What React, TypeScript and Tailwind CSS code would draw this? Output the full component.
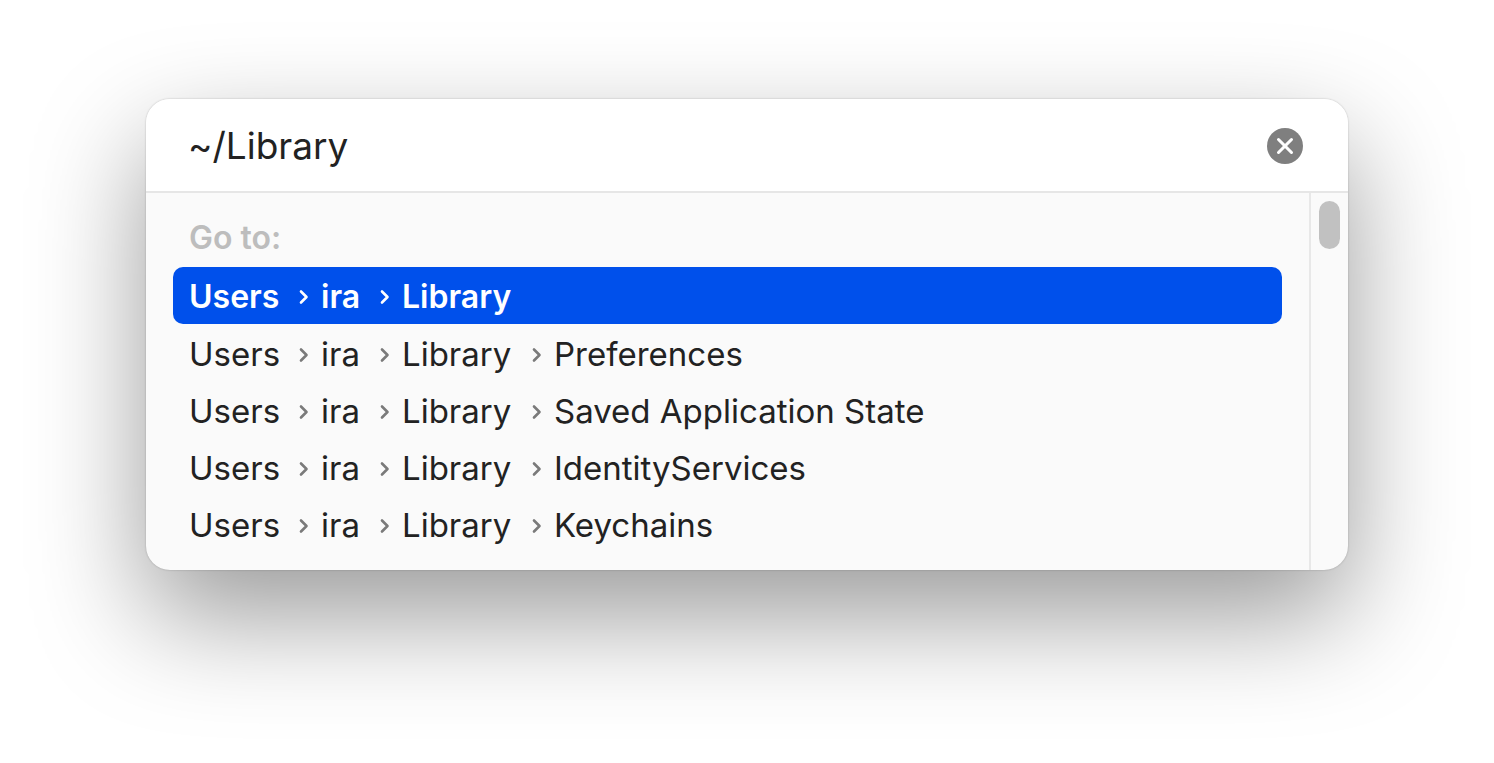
import { X } from 'lucide-react';

const ROOT = ['Users', 'ira', 'Library'];

const suggestions = [
  ROOT,
  [...ROOT, 'Preferences'],
  [...ROOT, 'Saved Application State'],
  [...ROOT, 'IdentityServices'],
  [...ROOT, 'Keychains'],
];

// Leading columns share a width so the chevrons line up between rows
const columns = ['w-[132px]', 'w-[81px]', 'w-[152px]'];

export default function App() {
  return (
    <main className="min-h-screen bg-white px-[146px] pt-[99px] pb-48 font-['Inter',sans-serif] text-[#222]">
      <section className="overflow-hidden rounded-3xl bg-[#fafafa] shadow-[0_0_2px_rgba(0,0,0,0.25),0_46px_112px_rgba(0,0,0,0.4)]">
        <SearchBar />
        <div className="flex">
          <div className="flex-1 px-[27px] pt-5 pb-[17px]">
            <h2 className="px-4 pb-1 text-[32px] leading-[50px] font-semibold text-[#bdbdbd]">Go to:</h2>
            <ul>
              {suggestions.map((path, i) => (
                <SuggestionRow key={path.join('/')} path={path} selected={i === 0} />
              ))}
            </ul>
          </div>
          <Scrollbar />
        </div>
      </section>
    </main>
  );
}

function SearchBar() {
  return (
    <div className="flex h-[94px] items-center border-b-2 border-[#e6e6e6] bg-white pt-0.5 pr-[45px] pl-[42px]">
      <input
        type="text"
        aria-label="Go to folder"
        defaultValue="~/Library"
        className="h-14 min-w-0 flex-1 bg-transparent text-[37px] leading-[56px] outline-none"
      />
      <button
        type="button"
        aria-label="Clear"
        className="flex size-9 items-center justify-center rounded-full bg-[#7f7f7f] text-white"
      >
        <X size={26} strokeWidth={2.8} />
      </button>
    </div>
  );
}

function SuggestionRow({ path, selected }: { path: string[]; selected: boolean }) {
  return (
    <li>
      <button
        type="button"
        className={`flex w-full items-center rounded-[10px] px-4 pt-0.5 text-left leading-[55px] ${
          selected ? 'mb-px bg-[#0050eb] text-[32px] font-semibold text-white' : 'text-[33px]'
        }`}
      >
        {path.map((name, i) => (
          <span
            key={name}
            className={`flex items-center justify-between whitespace-nowrap ${i < path.length - 1 ? columns[i] : ''}`}
          >
            {name}
            {i < path.length - 1 && <Chevron selected={selected} />}
          </span>
        ))}
      </button>
    </li>
  );
}

function Chevron({ selected }: { selected: boolean }) {
  return (
    <svg
      className={`mr-3 h-4 w-[10px] ${selected ? 'text-white' : 'text-[#7a7a7a]'}`}
      viewBox="0 0 10 16"
      fill="none"
      stroke="currentColor"
      strokeWidth="2.6"
      strokeLinecap="round"
      strokeLinejoin="round"
      aria-hidden="true"
    >
      <path d="M2 2.5L7.5 8L2 13.5" />
    </svg>
  );
}

function Scrollbar() {
  return (
    <div className="w-[39px] border-l-2 border-[#e8e8e8] px-2 pt-2">
      <div className="h-12 rounded-full bg-[#c1c1c1]" />
    </div>
  );
}
